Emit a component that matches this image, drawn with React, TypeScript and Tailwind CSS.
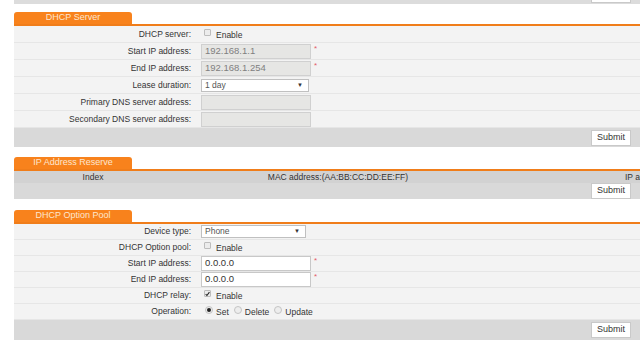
import React from "react";

const font = { fontFamily: '"Liberation Sans", Arial, sans-serif' };

type Row = { label: string; field: React.ReactNode };

const Star = () => <span className="ml-[3px] -mt-[5px] text-[8px] text-[#e35a6a]">*</span>;

const TextBox = ({ value, disabled }: { value?: string; disabled?: boolean }) => (
  <span
    className={`flex h-[15px] w-[110px] items-center border px-[3px] text-[9.5px] ${
      disabled ? "border-[#d0d0d0] bg-[#e6e6e4] text-[#808080]" : "border-[#c8c8c8] bg-white text-[#333]"
    }`}
  >
    {value}
  </span>
);

const Select = ({ value, w }: { value: string; w: string }) => (
  <span className={`flex h-[13px] ${w} items-center justify-between border border-[#c0c0c0] bg-white pl-[3px] pr-[5px] text-[8.5px] text-[#555]`}>
    {value}
    <span className="text-[6px] text-[#333]">▼</span>
  </span>
);

const Check = ({ on }: { on?: boolean }) => (
  <span className="flex items-end gap-[5px] pl-[3px] text-[8.5px] text-[#333]">
    <span className="mb-[4px] flex h-[7px] w-[7px] items-center justify-center rounded-[1px] border border-[#bdbdbd] bg-[#ececec]">
      {on && (
        <svg width="6" height="6" viewBox="0 0 6 6">
          <path d="M0.8 3.2 L2.3 4.8 L5.3 0.8" stroke="#222" strokeWidth="1.3" fill="none" />
        </svg>
      )}
    </span>
    <span className="leading-[10px]">Enable</span>
  </span>
);

const Radio = ({ label, on }: { label: string; on?: boolean }) => (
  <span className="flex items-end gap-[3px]">
    <span className="mb-[3px] flex h-[8px] w-[8px] items-center justify-center rounded-full border border-[#c4c4c4] bg-[#ededed]">
      {on && <span className="h-[4px] w-[4px] rounded-full bg-[#222]" />}
    </span>
    <span className="leading-[10px]">{label}</span>
  </span>
);

const Tab = ({ title }: { title: string }) => (
  <div className="flex h-[14px] items-end border-b-2 border-[#f07d1a]">
    <div className="flex h-[12px] w-[118px] items-center justify-center rounded-t-[3px] bg-[#f8821c] text-[9px] text-[#fde6cf]">
      {title}
    </div>
  </div>
);

const FormRows = ({ rows, rowH }: { rows: Row[]; rowH: string }) => (
  <div className="bg-[#f3f3f3]">
    {rows.map((r) => (
      <div key={r.label} className={`flex ${rowH} items-center border-b border-[#e6e6e6] text-[8.5px] text-[#333]`}>
        <div className="w-[178px] pr-[1px] text-right">{r.label}</div>
        <div className="ml-[9px] flex items-center">{r.field}</div>
      </div>
    ))}
  </div>
);

const SubmitBar = ({ h }: { h: string }) => (
  <div className={`flex ${h} items-center justify-end bg-[#d9d9d9] pr-[9px]`}>
    <span className="flex h-[16px] w-[40px] items-center justify-center border border-[#c9c9c9] bg-white text-[9px] text-[#333]">
      Submit
    </span>
  </div>
);

export default function App() {
  const serverRows: Row[] = [
    { label: "DHCP server:", field: <Check /> },
    { label: "Start IP address:", field: <><TextBox value="192.168.1.1" disabled /><Star /></> },
    { label: "End IP address:", field: <><TextBox value="192.168.1.254" disabled /><Star /></> },
    { label: "Lease duration:", field: <Select value="1 day" w="w-[108px]" /> },
    { label: "Primary DNS server address:", field: <TextBox disabled /> },
    { label: "Secondary DNS server address:", field: <TextBox disabled /> },
  ];

  const poolRows: Row[] = [
    { label: "Device type:", field: <Select value="Phone" w="w-[105px]" /> },
    { label: "DHCP Option pool:", field: <Check /> },
    { label: "Start IP address:", field: <><TextBox value="0.0.0.0" /><Star /></> },
    { label: "End IP address:", field: <><TextBox value="0.0.0.0" /><Star /></> },
    { label: "DHCP relay:", field: <Check on /> },
    {
      label: "Operation:",
      field: (
        <span className="flex gap-[5px] pl-[4px] text-[8.5px] text-[#333]">
          <Radio label="Set" on />
          <Radio label="Delete" />
          <Radio label="Update" />
        </span>
      ),
    },
  ];

  return (
    <div className="h-[360px] w-[640px] overflow-hidden bg-white" style={font}>
      <div className="ml-[14px] w-[626px]">
        <div className="flex h-[4px] justify-end bg-[#dcdcdc] pr-[9px]">
          <span className="h-[3px] w-[40px] border border-t-0 border-[#c9c9c9] bg-white" />
        </div>

        <div className="mt-[8px]">
          <Tab title="DHCP Server" />
          <FormRows rows={serverRows} rowH="h-[17px]" />
          <SubmitBar h="h-[19px]" />
        </div>

        <div className="mt-[10px]">
          <Tab title="IP Address Reserve" />
          <div className="flex h-[12px] items-center overflow-hidden whitespace-nowrap bg-[#d2d2d2] text-[8.5px] text-[#333]">
            <span className="w-[158px] shrink-0 text-center">Index</span>
            <span className="w-[332px] shrink-0 text-center">MAC address:(AA:BB:CC:DD:EE:FF)</span>
            <span className="shrink-0 pl-[121px]">IP address</span>
          </div>
          <SubmitBar h="h-[16px]" />
        </div>

        <div className="mt-[11px]">
          <Tab title="DHCP Option Pool" />
          <FormRows rows={poolRows} rowH="h-[16px]" />
          <SubmitBar h="h-[20px]" />
        </div>
      </div>
    </div>
  );
}
